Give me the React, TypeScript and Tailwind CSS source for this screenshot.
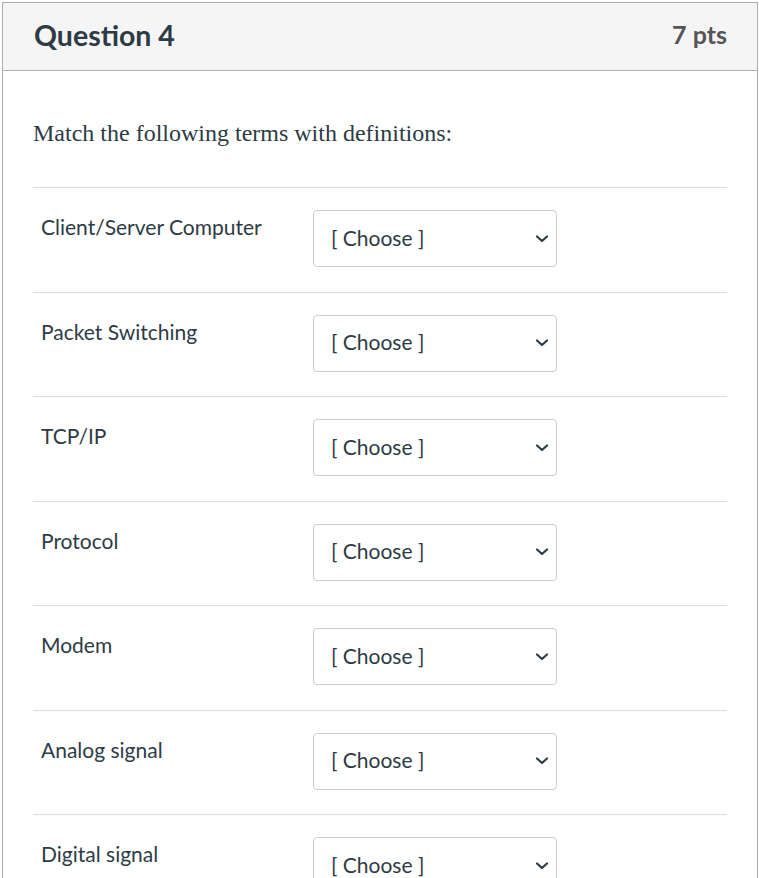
const terms = [
  "Client/Server Computer",
  "Packet Switching",
  "TCP/IP",
  "Protocol",
  "Modem",
  "Analog signal",
  "Digital signal",
];

function Chevron() {
  return (
    <svg
      viewBox="0 0 14 8"
      className="pointer-events-none absolute right-[7px] top-1/2 h-[8px] w-[14px] -translate-y-1/2"
      fill="none"
      stroke="#2d3b45"
      strokeWidth="2.2"
      strokeLinecap="round"
      strokeLinejoin="round"
    >
      <path d="M2 1.5 L7 6 L12 1.5" />
    </svg>
  );
}

function MatchRow({ term }: { term: string }) {
  return (
    <div className="flex border-t border-[#dcdcdc] pt-[22px] pb-[24.5px]">
      <div className="w-[280px] shrink-0 pl-[8px] pt-[2px] text-[21px] leading-[30px] text-[#2d3b45]">
        {term}
      </div>
      <div className="relative h-[57px] w-[244px] rounded-[4px] border border-[#c7cdd1] bg-white">
        <div className="flex h-full items-center pb-[2px] pl-[17px] text-[21px] text-[#2d3b45]">
          [ Choose ]
        </div>
        <Chevron />
      </div>
    </div>
  );
}

export default function App() {
  return (
    <div className="min-h-screen bg-white pl-[2px] pt-[2px] font-['Lato','Noto_Sans',sans-serif]">
      <div className="w-[756px] border border-[#adadad]">
        <div className="flex h-[68px] items-center justify-between border-b border-[#adadad] bg-[#f5f5f5] pb-[3px] pl-[31px] pr-[30px]">
          <h2 className="text-[28.5px] font-bold text-[#2d3b45]">Question 4</h2>
          <span className="text-[25px] font-bold text-[#555555]">7 pts</span>
        </div>
        <div className="px-[30px] pt-[48px]">
          <p className="font-['Liberation_Serif',serif] text-[24px] leading-[28px] text-[#2d3b45]">
            Match the following terms with definitions:
          </p>
          <div className="mt-[40px]">
            {terms.map((t) => (
              <MatchRow key={t} term={t} />
            ))}
          </div>
        </div>
      </div>
    </div>
  );
}
